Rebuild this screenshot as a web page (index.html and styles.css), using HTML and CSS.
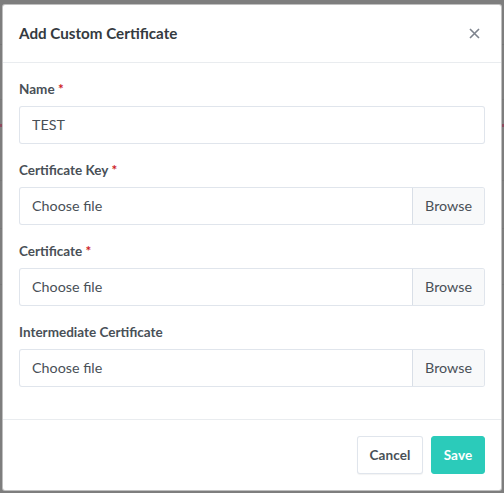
FILE: index.html
```html
<!DOCTYPE html>
<html lang="en">
<head>
<meta charset="utf-8">
<title>Add Custom Certificate</title>
<link rel="stylesheet" href="styles.css">
</head>
<body>
<div class="modal">
  <div class="modal-header">
    <h5 class="modal-title">Add Custom Certificate</h5>
    <button class="close" type="button" aria-label="Close">
      <svg width="11" height="11" viewBox="0 0 11 11"><path d="M1 1L10 10M10 1L1 10" stroke="#7d838d" stroke-width="1.6" fill="none"/></svg>
    </button>
  </div>
  <div class="modal-body">
    <div class="form-group">
      <label class="form-label">Name <span class="req">*</span></label>
      <input class="form-control" type="text" value="TEST">
    </div>
    <div class="form-group">
      <label class="form-label">Certificate Key <span class="req">*</span></label>
      <div class="custom-file"><span class="file-text">Choose file</span><span class="browse">Browse</span></div>
    </div>
    <div class="form-group">
      <label class="form-label">Certificate <span class="req">*</span></label>
      <div class="custom-file"><span class="file-text">Choose file</span><span class="browse">Browse</span></div>
    </div>
    <div class="form-group">
      <label class="form-label">Intermediate Certificate</label>
      <div class="custom-file"><span class="file-text">Choose file</span><span class="browse">Browse</span></div>
    </div>
  </div>
  <div class="modal-footer">
    <button class="btn btn-secondary" type="button">Cancel</button>
    <button class="btn btn-teal" type="button">Save</button>
  </div>
</div>
</body>
</html>
```

FILE: styles.css
```css
html, body {
  margin: 0;
  padding: 0;
}
body {
  width: 504px;
  height: 493px;
  overflow: hidden;
  font-family: "Lato", "Liberation Sans", sans-serif;
  color: #495057;
  background-color: #7e7e7e;
  background-image:
    linear-gradient(to bottom,
      transparent 44px, #757575 44px, #757575 45px, transparent 45px,
      transparent 99px, #777777 99px, #777777 100px, transparent 100px,
      transparent 124px, #8c4a5e 124px, #8c4a5e 127px, transparent 127px,
      transparent 180px, #777777 180px, #777777 181px, transparent 181px,
      transparent 228px, #777777 228px, #777777 229px, transparent 229px,
      transparent 284px, #777777 284px, #777777 285px, transparent 285px);
}
.modal {
  box-sizing: border-box;
  width: 500px;
  height: 487px;
  margin: 4px 0 0 2px;
  background: #fff;
  border: 1px solid rgba(0, 0, 0, 0.25);
  border-radius: 3px;
  display: flex;
  flex-direction: column;
}
.modal-header {
  box-sizing: border-box;
  height: 58px;
  padding: 16px;
  display: flex;
  align-items: center;
  justify-content: space-between;
  border-bottom: 1px solid #e9ecef;
}
.modal-title {
  margin: 0;
  font-size: 15.2px;
  font-weight: 700;
  line-height: 25px;
  color: #343a40;
}
.close {
  background: none;
  border: 0;
  padding: 0;
  margin-right: 5px;
  display: flex;
  cursor: pointer;
}
.modal-body {
  padding: 16px 16px 0;
  flex: 1;
}
.form-group {
  margin-bottom: 16px;
}
.form-label {
  display: block;
  font-size: 13.5px;
  font-weight: 700;
  line-height: 20px;
  margin-bottom: 7px;
  color: #495057;
}
.req {
  color: #cd201f;
}
.form-control,
.custom-file {
  box-sizing: border-box;
  width: 100%;
  height: 38px;
  border: 1px solid rgba(0, 40, 100, 0.12);
  border-radius: 3px;
  font-family: inherit;
  font-size: 14.3px;
  color: #495057;
  background: #fff;
}
.form-control {
  display: block;
  padding: 0 12px 2px;
  outline: none;
}
.custom-file {
  display: flex;
  align-items: stretch;
  overflow: hidden;
}
.file-text {
  flex: 1;
  display: flex;
  align-items: center;
  padding: 0 12px 2px;
}
.browse {
  display: flex;
  align-items: center;
  padding: 0 12px 2px;
  background: #f8f9fa;
  border-left: 1px solid rgba(0, 40, 100, 0.12);
}
.modal-footer {
  box-sizing: border-box;
  height: 71px;
  padding: 16px;
  border-top: 1px solid #e9ecef;
  display: flex;
  justify-content: flex-end;
  align-items: center;
  gap: 8px;
}
.btn {
  box-sizing: border-box;
  height: 38px;
  padding: 0 10px;
  border-radius: 3px;
  font-family: inherit;
  font-size: 13.5px;
  font-weight: 700;
  letter-spacing: 0.01em;
  cursor: pointer;
}
.btn-secondary {
  background: #fff;
  color: #495057;
  border: 1px solid rgba(0, 40, 100, 0.12);
  box-shadow: 0 1px 1px rgba(0, 0, 0, 0.05);
  width: 66px;
}
.btn-teal {
  background: #2bcbba;
  color: #fff;
  border: 1px solid #2bcbba;
  width: 54px;
}
```
